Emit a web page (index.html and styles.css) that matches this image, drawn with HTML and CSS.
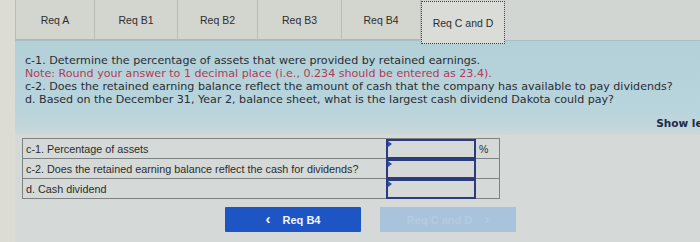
FILE: index.html
```html
<!DOCTYPE html>
<html>
<head>
<meta charset="utf-8">
<link rel="stylesheet" href="styles.css">
</head>
<body>
<div class="page">
  <div class="tabs">
    <div class="tab w80">Req A</div>
    <div class="tab w83">Req B1</div>
    <div class="tab w80">Req B2</div>
    <div class="tab w84">Req B3</div>
    <div class="tab w79">Req B4</div>
    <div class="tab active w84">Req C and D</div>
  </div>
  <div class="panel">
    <p class="q">c-1. Determine the percentage of assets that were provided by retained earnings.</p>
    <p class="q note">Note: Round your answer to 1 decimal place (i.e., 0.234 should be entered as 23.4).</p>
    <p class="q">c-2. Does the retained earning balance reflect the amount of cash that the company has available to pay dividends?</p>
    <p class="q">d. Based on the December 31, Year 2, balance sheet, what is the largest cash dividend Dakota could pay?</p>
    <div class="show">Show less</div>
  </div>
  <div class="work">
    <table class="grid">
      <tr>
        <td class="lbl">c-1. Percentage of assets</td>
        <td class="inp"><div class="box"><span class="tri"></span></div></td>
        <td class="unit">%</td>
      </tr>
      <tr>
        <td class="lbl">c-2. Does the retained earning balance reflect the cash for dividends?</td>
        <td class="inp"><div class="box"><span class="tri"></span></div></td>
        <td class="unit"></td>
      </tr>
      <tr>
        <td class="lbl">d. Cash dividend</td>
        <td class="inp"><div class="box"><span class="tri"></span></div></td>
        <td class="unit"></td>
      </tr>
    </table>
    <div class="nav">
      <div class="btn prev"><span class="chev">&lsaquo;</span>Req B4</div>
      <div class="btn next">Req C and D<span class="chev r">&rsaquo;</span></div>
    </div>
  </div>
</div>
</body>
</html>
```
FILE: styles.css
```css
html, body {
  margin: 0;
  padding: 0;
  overflow: hidden;
  background: #d6d8d2;
}
.page {
  width: 725px;
  padding-left: 15px;
  box-sizing: border-box;
  height: 242px;
  background: linear-gradient(90deg, #dcdcd5 0, #dcdcd5 15px, #d2d6d2 15px);
}
.tabs {
  display: flex;
  height: 40px;
  align-items: stretch;
}
.tab {
  box-sizing: border-box;
  height: 40px;
  border-right: 1px solid #b9bcb6;
  border-bottom: 1px solid #b3b7b2;
  background: #d3d5cf;
  font-family: "Liberation Sans", Arial, sans-serif;
  font-size: 10.5px;
  color: #2e2e2e;
  display: flex;
  align-items: center;
  justify-content: center;
  padding-top: 1px;
}
.tab:first-child { border-left: 1px solid #b9bcb6; }
.w80 { width: 80px; }
.w83 { width: 83px; }
.w84 { width: 84px; }
.w79 { width: 79px; }
.tab.active {
  background: #d9dcd7;
  border: 1px dotted #2a3c8c;
  height: 43px;
  margin-top: 1px;
  position: relative;
  z-index: 2;
  padding-top: 0;
}
.panel {
  background: linear-gradient(180deg, #b3d0d8 0, #b8d4dc 70%, #c2d6da 92%, #cfd8d6 100%);
  padding: 13px 10px 0 10px;
  height: 95px;
  box-sizing: border-box;
  border-top: 1px solid #a9bfc3;
}
.q {
  margin: 0;
  font-family: "DejaVu Sans", Verdana, sans-serif;
  font-size: 11.1px;
  line-height: 13px;
  color: #2a2d33;
  white-space: nowrap;
}
.note { color: #b43a55; }
.show {
  text-align: right;
  font-family: "DejaVu Sans", Verdana, sans-serif;
  font-weight: bold;
  font-size: 10.5px;
  color: #1e2a4a;
  margin-top: 11px;
}
.work {
  padding: 3px 0 0 7px;
  background: #d5dad8;
  height: 107px;
  box-sizing: border-box;
}
.grid {
  border-collapse: collapse;
  font-family: "Liberation Sans", Arial, sans-serif;
  font-size: 10.8px;
  color: #2c2c2c;
}
.grid td {
  border: 1px solid #7e8283;
  height: 19px;
  padding: 0;
}
.lbl {
  width: 360px;
  padding-left: 3px !important;
  white-space: nowrap;
}
.inp { width: 88px; }
.unit {
  width: 20px;
  padding-left: 3px !important;
  font-size: 10.5px;
}
.box {
  position: relative;
  box-sizing: border-box;
  height: 20px;
  border: 2px solid #2c3a7e;
  margin: -1px;
}
.tri {
  position: absolute;
  left: 0;
  top: 0;
  width: 0;
  height: 0;
  border-top: 3px solid transparent;
  border-bottom: 3px solid transparent;
  border-left: 4px solid #2a4fb0;
}
.nav {
  display: flex;
  gap: 19px;
  margin-top: 8px;
  padding-left: 203px;
}
.btn {
  width: 136px;
  height: 25px;
  box-sizing: border-box;
  display: flex;
  align-items: center;
  justify-content: center;
  font-family: "Liberation Sans", Arial, sans-serif;
  font-size: 11px;
  font-weight: bold;
}
.prev {
  background: #1d56c4;
  color: #f2f5ff;
  border-radius: 1px;
}
.next {
  background: #a9c3dc;
  color: #b6cbe0;
}
.chev {
  font-size: 15px;
  margin-right: 12px;
  line-height: 1;
  margin-top: -2px;
}
.chev.r {
  margin-right: 0;
  margin-left: 12px;
}
```
